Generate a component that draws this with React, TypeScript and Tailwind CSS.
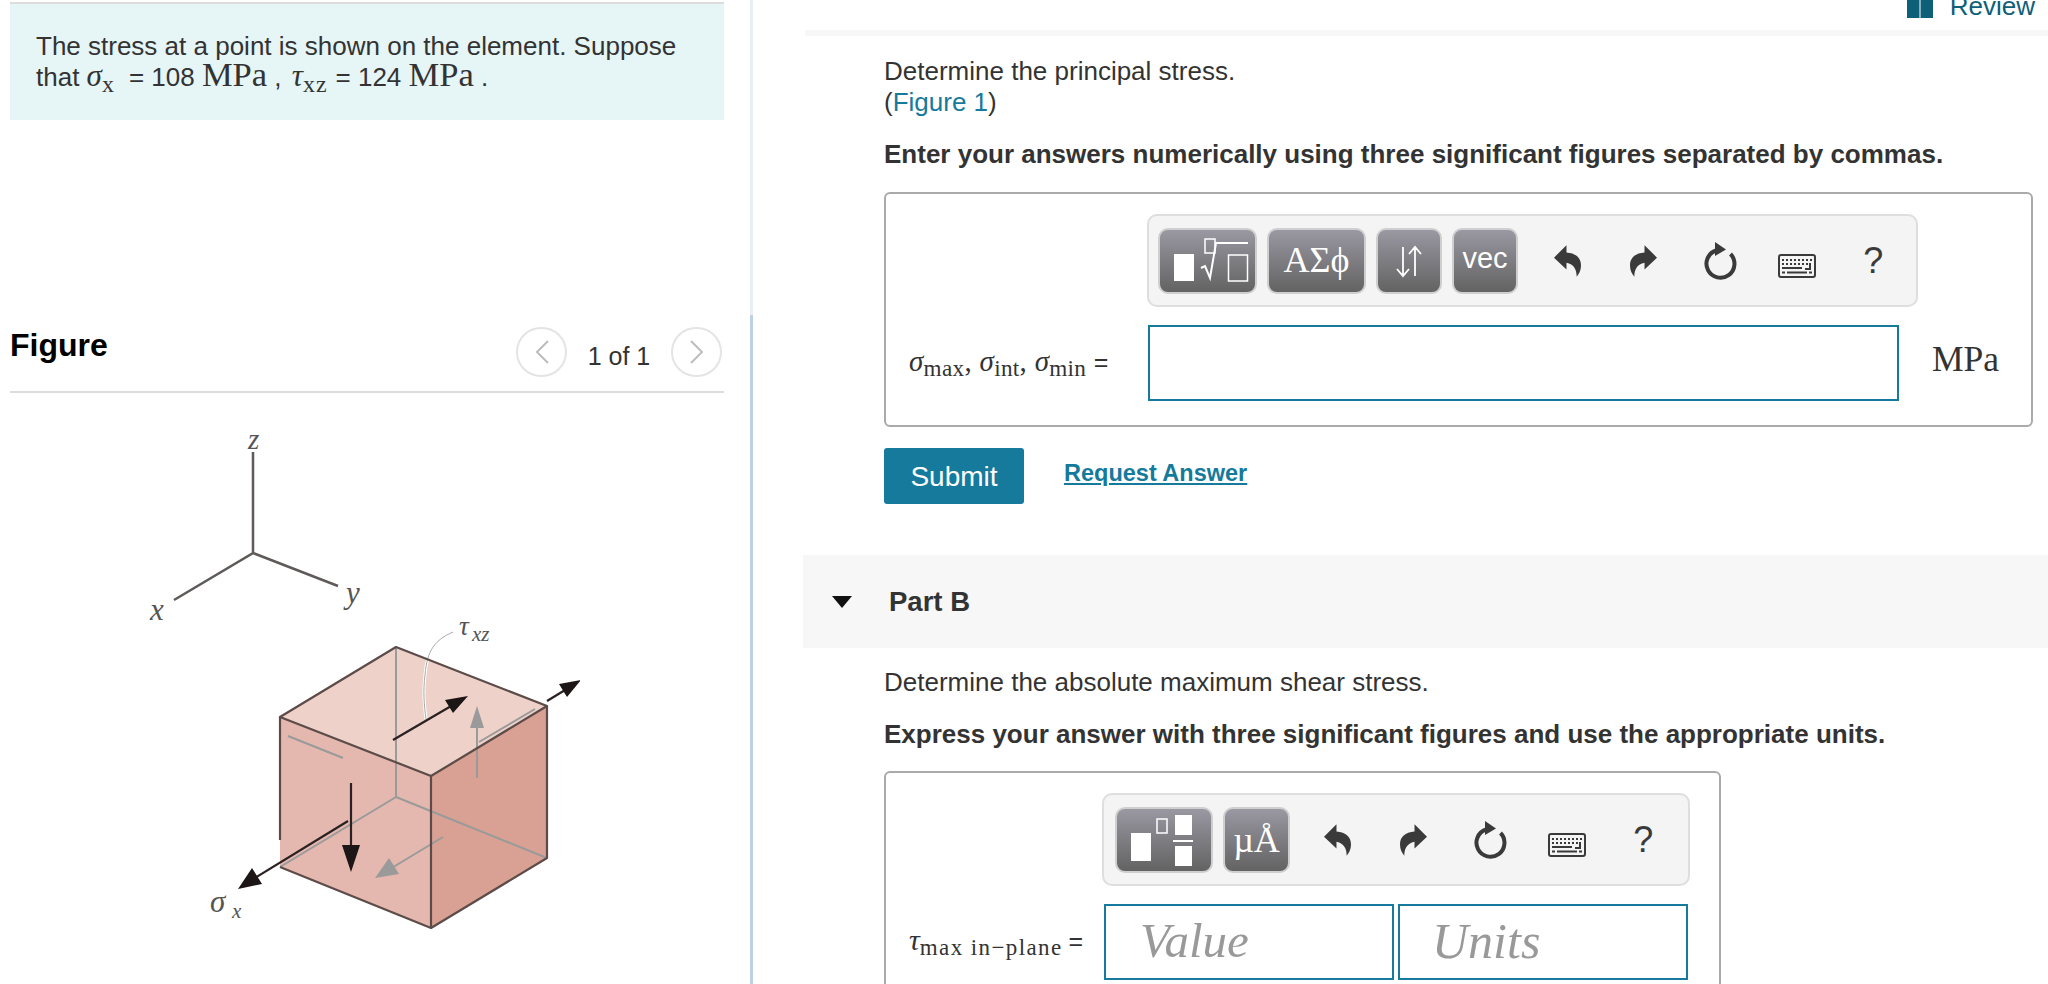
import React from "react";

const sans = "font-['Liberation_Sans',Arial,sans-serif]";
const serif = "font-['Liberation_Serif',serif]";

function Undo({ flip = false }: { flip?: boolean }) {
  return (
    <svg width="27" height="32" viewBox="0 0 80 94" className={flip ? "-scale-x-100" : ""}>
      <path d="M0 37 L37 0 V22 C65 24 80 38 80 60 C80 75 74 85 67 94 C68 75 60 56 37 52 V72 Z" fill="#3a3a3a" />
    </svg>
  );
}

function Reset() {
  return (
    <svg width="34" height="38" viewBox="0 0 34 38">
      <path d="M13 8.5 A14 14 0 1 0 27.5 12" fill="none" stroke="#3a3a3a" strokeWidth="4" />
      <path d="M12 0 L23 7.5 L12 14 Z" fill="#3a3a3a" />
    </svg>
  );
}

function Keyboard() {
  const rows = [
    [5, 9, 13, 17, 21, 25, 29, 33],
    [5, 9, 13, 17, 21, 25, 29],
  ];
  return (
    <svg width="38" height="24" viewBox="0 0 38 24">
      <rect x="1" y="1" width="36" height="22" rx="2" fill="#f4f4f4" stroke="#3a3a3a" strokeWidth="2" />
      {rows.map((r, i) =>
        r.map((x) => <rect key={`${i}-${x}`} x={x - 1} y={5 + i * 4} width="2" height="2" fill="#3a3a3a" />)
      )}
      <rect x="4" y="13" width="20" height="2" fill="#3a3a3a" />
      <path d="M32 9 V15 H27" fill="none" stroke="#3a3a3a" strokeWidth="2" />
      <rect x="4" y="17.500" width="3" height="2" fill="#3a3a3a" />
      <rect x="9" y="17.500" width="20" height="2" fill="#3a3a3a" />
      <rect x="31" y="17.500" width="3" height="2" fill="#3a3a3a" />
    </svg>
  );
}

function TB({ w, children }: { w: string; children: React.ReactNode }) {
  return (
    <div className={`${w} h-[66px] shrink-0 rounded-[10px] border-2 border-[#cfcfcf] bg-linear-to-b from-[#9a98a2] to-[#636363] flex items-center justify-center text-white`}>
      {children}
    </div>
  );
}

function Tools({ ml }: { ml: string }) {
  const slot = "w-[76.500px] flex justify-center";
  return (
    <div className={`flex items-center ${ml}`}>
      <div className={slot}><Undo /></div>
      <div className={slot}><Undo flip /></div>
      <div className={slot}><Reset /></div>
      <div className={`${slot} pt-[10px]`}><Keyboard /></div>
      <div className={`${slot} text-[36px] leading-none text-[#3a3a3a] ${sans}`}>?</div>
    </div>
  );
}

function Sub({ children }: { children: React.ReactNode }) {
  return <sub className="text-[0.8em] not-italic">{children}</sub>;
}

function Figure() {
  const dark = "#5b4c48";
  const gray = "#9a9a9a";
  return (
    <svg width="450" height="520" viewBox="130 420 450 520" className="block">
      <defs>
        <filter id="soft"><feGaussianBlur stdDeviation="0.55" /></filter>
      </defs>
      <g filter="url(#soft)">
        <g stroke="#5e5a59" strokeWidth="2.500" fill="none">
          <path d="M253 452 V553 L174 600 M253 553 L338 586" />
        </g>
        <path d="M396 647 L547 706 L431 776 L280 717 Z" fill="#eed1c9" />
        <path d="M280 717 L431 776 V928 L280 867 Z" fill="#e4b8ae" />
        <path d="M431 776 L547 706 V858 L431 928 Z" fill="#d9a193" />
        <g stroke={gray} strokeWidth="2" fill="none">
          <path d="M396 647 V797 L280 867 M396 797 L547 858" />
          <path d="M288 736 L343 758 M479 742 L535 709" />
          <path d="M477 778 V722" />
          <path d="M443 837 L390 869" />
        </g>
        <path d="M477 706 L470 728 H484 Z M375 878 L389 858 L399 874 Z" fill={gray} />
        <path d="M453 632 C435 640 427 650 425 675 C423 690 424 705 426 719" fill="none" stroke="#fff" strokeWidth="3" />
        <path d="M453 632 C435 640 427 650 425 675 C423 690 424 705 426 719" fill="none" stroke="#aaa" strokeWidth="1" />
        <g stroke={dark} strokeWidth="2.200" fill="none" strokeLinejoin="round">
          <path d="M396 647 L547 706 L431 776 L280 717 Z" />
          <path d="M280 717 V840 M431 776 V928 M547 706 V858 L431 928 L280 867" />
        </g>
        <g stroke="#2a2020" strokeWidth="2.200" fill="none">
          <path d="M393 740 L458 702" />
          <path d="M351 783 V855" />
          <path d="M348 821 L250 881" />
          <path d="M547 701 L570 687" />
        </g>
        <path d="M468 696 L445 700 L453 713 Z M351 872 L342 845 H360 Z M238 889 L252 868 L262 884 Z M581 680 L559 684 L567 697 Z" fill="#1c1414" />
      </g>
      <g fill="#555" fontFamily="Liberation Serif, serif" fontStyle="italic">
        <text x="248" y="449" fontSize="29">z</text>
        <text x="150" y="620" fontSize="31">x</text>
        <text x="346" y="603" fontSize="31">y</text>
        <text x="459" y="635" fontSize="27">τ</text>
        <text x="472" y="641" fontSize="21">xz</text>
        <text x="210" y="912" fontSize="31">σ</text>
        <text x="232" y="918" fontSize="21">x</text>
      </g>
    </svg>
  );
}

export default function App() {
  const big = `${serif} text-[34.500px] leading-[0]`;
  const greek = `${serif} italic text-[31px] leading-[0]`;
  const tiny = "text-[24px] tracking-[1px]";
  return (
    <div className={`flex h-[984px] w-[2048px] overflow-hidden bg-white text-[26px] leading-[31px] text-[#333] ${sans}`}>
      <div className="w-[750px] shrink-0 pl-[10px] pr-[26px] pt-[2px]">
        <div className="h-[118px] border-t-2 border-[#dddddd] bg-[#e6f5f6] pl-[26px] pt-[27px] leading-[31px] text-[26px]">
          <div>The stress at a point is shown on the element. Suppose</div>
          <div>
            that <span className={greek}>σ<sub className={`${tiny} not-italic`}>x</sub></span>
            <span className="ml-[14px]">= 108 </span><span className={big}>MPa</span> , <span className={`${greek} ml-[3px]`}>τ<sub className={`${tiny} not-italic`}>xz</sub></span>
            <span className="ml-[8px]">= 124 </span><span className={big}>MPa</span> .
          </div>
        </div>
        <div className="mt-[207px] flex h-[66px] items-start justify-between border-b-2 border-[#dddddd]">
          <div className="text-[32px] leading-[36px] font-bold text-black">Figure</div>
          <div className="flex items-center pr-[2px] text-[25px]">
            <div className="flex h-[50px] w-[51px] items-center justify-center rounded-full border-2 border-[#e4e4e4]">
              <svg width="16" height="26" viewBox="0 0 16 26"><path d="M14 2 L3 13 L14 24" fill="none" stroke="#bdbdbd" strokeWidth="2" /></svg>
            </div>
            <div className="w-[104px] pt-[8px] text-center">1 of 1</div>
            <div className="flex h-[50px] w-[51px] items-center justify-center rounded-full border-2 border-[#e4e4e4]">
              <svg width="16" height="26" viewBox="0 0 16 26"><path d="M2 2 L13 13 L2 24" fill="none" stroke="#bdbdbd" strokeWidth="2" /></svg>
            </div>
          </div>
        </div>
        <div className="ml-[120px] mt-[27px]"><Figure /></div>
      </div>

      <div className="flex w-[3px] shrink-0 flex-col">
        <div className="h-[315px] bg-[#e9eef6]" />
        <div className="flex-1 bg-[#bcd0e6]" />
      </div>

      <div className="min-w-0 flex-1">
        <div className="h-[30px] overflow-hidden">
          <div className="-mt-[9px] flex items-center justify-end gap-[17px] pr-[13px] text-[#0e6079]">
            <svg width="26" height="23" viewBox="0 0 26 23"><path d="M0 0 H12.500 V23 H0 Z M13.500 0 H26 V23 H13.500 Z" fill="#0e6079" /></svg>
            <span className="text-[26px] leading-[31px]">Review</span>
          </div>
        </div>
        <div className="ml-[52px] h-[6px] bg-[#f7f7f7]" />

        <div className="pl-[131px]">
          <div className="mt-[20px]">Determine the principal stress.</div>
          <div>(<span className="text-[#157a9c]">Figure 1</span>)</div>
          <div className="mt-[21px] font-bold">Enter your answers numerically using three significant figures separated by commas.</div>

          <div className="mt-[22px] h-[235px] w-[1149px] rounded-[6px] border-2 border-[#aaaaaa] pl-[261px] pt-[20px]">
            <div className="flex h-[93px] w-[771px] items-center rounded-[10px] border-2 border-[#dedede] bg-[#f4f4f4] pl-[9px]">
              <div className="flex gap-[10px]">
                <TB w="w-[99px]">
                  <svg width="95" height="62" viewBox="0 0 95 62">
                    <rect x="14" y="24" width="20" height="27" fill="#fff" />
                    <rect x="45" y="9" width="10" height="14" fill="none" stroke="#fff" strokeWidth="1.500" />
                    <path d="M41 38 L45 36 L50 48 L56 13 H88" fill="none" stroke="#fff" strokeWidth="2" />
                    <rect x="68.500" y="25" width="19" height="26" fill="none" stroke="#fff" strokeWidth="1.500" />
                  </svg>
                </TB>
                <TB w="w-[99px]"><span className={`${serif} text-[36px]`}>ΑΣϕ</span></TB>
                <TB w="w-[66px]">
                  <svg width="30" height="36" viewBox="0 0 30 36">
                    <path d="M9 4 V33 M3 26 L9 33 L15 26 M21 33 V4 M15 11 L21 4 L27 11" fill="none" stroke="#fff" strokeWidth="1.800" />
                  </svg>
                </TB>
                <TB w="w-[66px]"><span className="text-[29px] -mt-[5px]">vec</span></TB>
              </div>
              <Tools ml="ml-[11px]" />
            </div>
            <div className="mt-[18px] flex h-[76px] items-center">
              <div className="-ml-[238px] w-[239px] -mt-[3px]">
                <span className={`${serif} text-[29px] tracking-[0.3px] whitespace-nowrap`}>
                  <i>σ</i><Sub>max</Sub>, <i>σ</i><Sub>int</Sub>, <i>σ</i><Sub>min</Sub> <span className={`${sans} text-[25px]`}>=</span>
                </span>
              </div>
              <div className="h-[76px] w-[751px] border-2 border-[#157a9c]" />
              <div className={`${serif} ml-[33px] -mt-[7px] text-[35.500px]`}>MPa</div>
            </div>
          </div>

          <div className="mt-[21px] flex items-center">
            <div className="flex h-[56px] w-[140px] items-center justify-center rounded-[3px] bg-[#157a9c] text-[28px] text-white">Submit</div>
            <div className="ml-[40px] -mt-[5px] text-[23.500px] font-bold text-[#157a9c] underline">Request Answer</div>
          </div>
        </div>

        <div className="ml-[50px] mt-[51px] flex h-[93px] items-center bg-[#f7f7f7] pl-[29px]">
          <svg width="20" height="12" viewBox="0 0 20 12"><path d="M0 0 H20 L10 12 Z" fill="#111" /></svg>
          <div className="ml-[37px] text-[27.500px] font-bold">Part B</div>
        </div>

        <div className="pl-[131px]">
          <div className="mt-[19px]">Determine the absolute maximum shear stress.</div>
          <div className="mt-[21px] font-bold">Express your answer with three significant figures and use the appropriate units.</div>
          <div className="mt-[21px] h-[260px] w-[837px] rounded-[6px] border-2 border-[#aaaaaa] pl-[216px] pt-[20px]">
            <div className="flex h-[93px] w-[588px] items-center rounded-[10px] border-2 border-[#dedede] bg-[#f4f4f4] pl-[11px]">
              <div className="flex gap-[10px]">
                <TB w="w-[98px]">
                  <svg width="94" height="62" viewBox="0 0 94 62">
                    <rect x="14" y="24" width="20" height="28" fill="#fff" />
                    <rect x="40" y="10" width="10" height="14" fill="none" stroke="#fff" strokeWidth="1.500" />
                    <rect x="58" y="6" width="17" height="20" fill="#fff" />
                    <rect x="56" y="31" width="20" height="2" fill="#fff" />
                    <rect x="58" y="37" width="17" height="20" fill="#fff" />
                  </svg>
                </TB>
                <TB w="w-[67px]"><span className={`${serif} text-[36px] mt-[2px]`}>µÅ</span></TB>
              </div>
              <Tools ml="ml-[9px]" />
            </div>
            <div className="mt-[18px] flex h-[76px] items-center gap-[4px]">
              <div className="-ml-[193px] w-[191px] -mt-[3px]">
                <span className={`${serif} text-[24px] whitespace-nowrap`}>
                  <i className="text-[30px]">τ</i><sub className="text-[23px] tracking-[1.4px]">max in−plane</sub> <span className={`${sans} text-[25px]`}>=</span>
                </span>
              </div>
              <div className={`h-[76px] w-[290px] border-2 border-[#157a9c] pl-[34px] ${serif} text-[49px] leading-[70px] italic text-[#999]`}>Value</div>
              <div className={`h-[76px] w-[290px] border-2 border-[#157a9c] pl-[32px] ${serif} text-[50px] leading-[70px] italic text-[#999]`}>Units</div>
            </div>
          </div>
        </div>
      </div>
    </div>
  );
}
